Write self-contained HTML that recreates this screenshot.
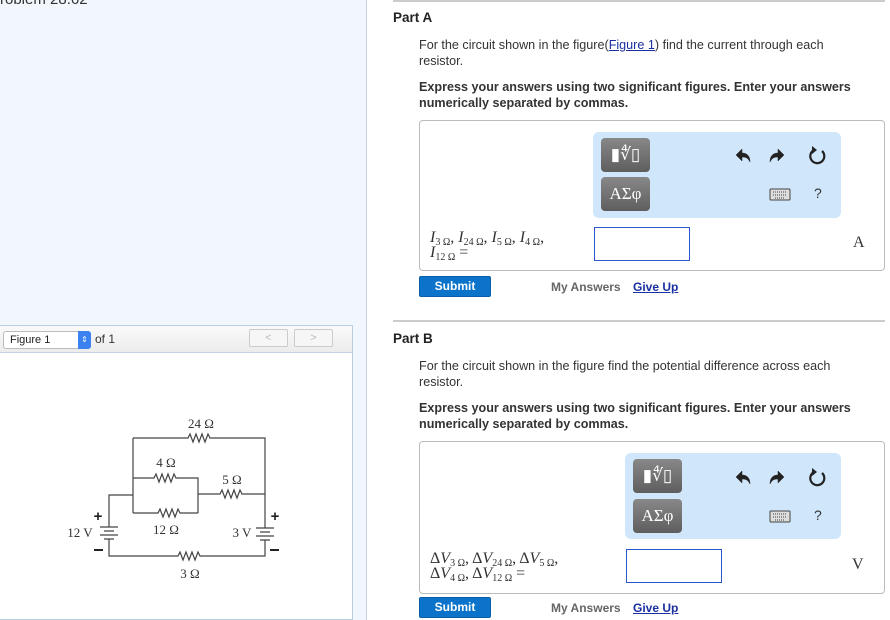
<!DOCTYPE html>
<html><head><meta charset="utf-8"><style>
*{margin:0;padding:0;box-sizing:border-box}
body{width:890px;height:620px;overflow:hidden;background:#fff;font-family:"Liberation Sans",Arial,sans-serif;color:#333;position:relative}
.a{position:absolute}
.t{font-size:12.6px;line-height:16px;color:#333}
.b{font-size:12.6px;line-height:16px;font-weight:bold;color:#333}
.h{font-size:13.5px;font-weight:bold;color:#222}
.box{border:1px solid #bbb;border-radius:4px;background:#fff}
.tb{background:#cfe6fb;border-radius:6px}
.btn{background:linear-gradient(#888,#5e5e5e);border-radius:4px;color:#fff;font-family:"Liberation Serif",serif;font-size:17px;text-align:center}
.inp{border:1px solid #2a57cc;background:#fff}
.sub{background:#0b73c9;border:1px solid #0a5fa8;border-radius:2px;color:#fff;font-weight:bold;font-size:12px;text-align:center;line-height:19px}
.ma{font-size:12px;font-weight:bold;color:#666}
.gu{font-size:12px;font-weight:bold;color:#1a2fa0;text-decoration:underline}
.m{font-family:"Liberation Serif",serif;font-size:16px;color:#333;line-height:15px}
.m i{font-style:italic}
.m sub{font-size:10px;font-style:normal;vertical-align:-3px;line-height:0}
</style></head><body>
<div class="a" style="left:0;top:0;width:367px;height:620px;background:#f2f7fd;border-right:1px solid #c3d3e3"></div>
<div class="a" style="left:0;top:-9px;font-size:15px;color:#333">roblem 28.62</div>
<div class="a" style="left:393px;top:0;width:492px;height:2px;background:#ccc"></div>

<div class="a" style="left:0;top:325px;width:353px;height:295px;background:#fff;border:1px solid #b9cde0;border-left:none"></div>
<div class="a" style="left:0;top:326px;width:352px;height:27px;background:linear-gradient(#fafafa,#ececec);border-bottom:1px solid #c3d3e3"></div>
<div class="a" style="left:3px;top:331px;width:88px;height:18px;border:1px solid #bbb;border-radius:3px;background:#fff;font-size:11px;line-height:16px;padding-left:6px;color:#222">Figure 1</div>
<div class="a" style="left:78px;top:331px;width:13px;height:18px;background:#3b82f0;border-radius:0 3px 3px 0;color:#fff;font-size:8px;text-align:center;line-height:18px">⇕</div>
<div class="a" style="left:95px;top:332px;font-size:12px;color:#333">of 1</div>
<div class="a" style="left:249px;top:329px;width:39px;height:18px;border:1px solid #ccc;border-radius:2px;background:#f6f6f6;color:#bbb;font-size:11px;text-align:center;line-height:16px">&lt;</div>
<div class="a" style="left:294px;top:329px;width:39px;height:18px;border:1px solid #ccc;border-radius:2px;background:#f6f6f6;color:#bbb;font-size:11px;text-align:center;line-height:16px">&gt;</div>

<svg class="a" style="left:0;top:0" width="367" height="620">
<g stroke="#444" stroke-width="1.2" fill="none">
<path d="M133 438H188l2-4 3 8 3-8 3 8 3-8 3 8 3-8 2 4H265V528"/>
<path d="M133 438V513"/>
<path d="M133 478H154l2-4 3 8 3-8 3 8 3-8 3 8 3-8 2 4H198V513"/>
<path d="M133 513H158l2-4 3 8 3-8 3 8 3-8 3 8 3-8 2 4H198"/>
<path d="M198 494H220l2-4 3 8 3-8 3 8 3-8 3 8 3-8 2 4H265"/>
<path d="M133 495H109V527M109 539V556H178l2-4 3 8 3-8 3 8 3-8 3 8 3-8 2 4H265V540"/>
<path d="M100 527H118M104 531H114M100 535H118M104 539H114"/>
<path d="M256 528H274M260 532H270M256 536H274M260 540H270"/>
</g>
<g font-family="Liberation Serif,serif" font-size="13" fill="#333" text-anchor="middle">
<text x="201" y="428">24 Ω</text>
<text x="166" y="467">4 Ω</text>
<text x="232" y="484">5 Ω</text>
<text x="166" y="534">12 Ω</text>
<text x="190" y="578">3 Ω</text>
<text x="80" y="537">12 V</text>
<text x="242" y="537">3 V</text>
</g>
<g font-family="Liberation Sans,sans-serif" font-size="15" font-weight="bold" fill="#222" text-anchor="middle">
<text x="98" y="521">+</text><text x="275" y="521">+</text>
</g>
<path d="M94 550H103M270 550H279" stroke="#222" stroke-width="2"/>
</svg>

<!-- Part A -->
<div class="a h" style="left:393px;top:10px">Part A</div>
<div class="a t" style="left:419px;top:37px;width:440px">For the circuit shown in the figure(<span style="color:#1a2fa0;text-decoration:underline">Figure 1</span>) find the current through each resistor.</div>
<div class="a b" style="left:419px;top:79px;width:460px">Express your answers using two significant figures. Enter your answers numerically separated by commas.</div>
<div class="a box" style="left:419px;top:120px;width:466px;height:151px"></div>
<div class="a tb" style="left:593px;top:132px;width:248px;height:86px"></div>
<div class="a btn" style="left:601px;top:138px;width:49px;height:34px;line-height:34px">▮∜▯</div>
<div class="a btn" style="left:601px;top:177px;width:49px;height:34px;line-height:34px">ΑΣφ</div>
<svg class="a" style="left:730px;top:142px" width="100" height="65">
<g fill="#222" stroke="#222">
<path d="M6 13l6-6v4c5 0 8 3 8 9-2-4-4-5-8-5v4z" stroke-width="0.5"/>
<path d="M54 13l-6-6v4c-5 0-8 3-8 9 2-4 4-5 8-5v4z" stroke-width="0.5"/>
<path d="M92 9a7 7 0 1 1-8-1" fill="none" stroke-width="2.2"/>
<path d="M82 4l5 4-5 4z" stroke="none"/>
<rect x="40" y="47" width="20" height="11" rx="1" fill="#ddd" stroke="#444"/>
<path d="M43 50h14M43 53h14M45 56h10" stroke="#444" stroke-width="1" stroke-dasharray="1 1"/>
</g>
<text x="84" y="56" font-family="Liberation Sans,sans-serif" font-size="14" fill="#333">?</text>
</svg>
<div class="a m" style="left:430px;top:230px;width:170px"><i>I</i><sub>3 Ω</sub>, <i>I</i><sub>24 Ω</sub>, <i>I</i><sub>5 Ω</sub>, <i>I</i><sub>4 Ω</sub>,<br><i>I</i><sub>12 Ω</sub> =</div>
<div class="a inp" style="left:594px;top:227px;width:96px;height:34px"></div>
<div class="a m" style="left:853px;top:235px">A</div>
<div class="a sub" style="left:419px;top:276px;width:72px;height:21px">Submit</div>
<div class="a ma" style="left:551px;top:280px">My Answers</div>
<div class="a gu" style="left:633px;top:280px">Give Up</div>

<!-- Part B -->
<div class="a" style="left:393px;top:320px;width:492px;height:2px;background:#ccc"></div>
<div class="a h" style="left:393px;top:331px">Part B</div>
<div class="a t" style="left:419px;top:358px;width:445px">For the circuit shown in the figure find the potential difference across each resistor.</div>
<div class="a b" style="left:419px;top:400px;width:460px">Express your answers using two significant figures. Enter your answers numerically separated by commas.</div>
<div class="a box" style="left:419px;top:441px;width:466px;height:153px"></div>
<div class="a tb" style="left:625px;top:453px;width:216px;height:86px"></div>
<div class="a btn" style="left:633px;top:459px;width:49px;height:34px;line-height:34px">▮∜▯</div>
<div class="a btn" style="left:633px;top:499px;width:49px;height:34px;line-height:34px">ΑΣφ</div>
<svg class="a" style="left:730px;top:464px" width="100" height="65">
<g fill="#222" stroke="#222">
<path d="M6 13l6-6v4c5 0 8 3 8 9-2-4-4-5-8-5v4z" stroke-width="0.5"/>
<path d="M54 13l-6-6v4c-5 0-8 3-8 9 2-4 4-5 8-5v4z" stroke-width="0.5"/>
<path d="M92 9a7 7 0 1 1-8-1" fill="none" stroke-width="2.2"/>
<path d="M82 4l5 4-5 4z" stroke="none"/>
<rect x="40" y="47" width="20" height="11" rx="1" fill="#ddd" stroke="#444"/>
<path d="M43 50h14M43 53h14M45 56h10" stroke="#444" stroke-width="1" stroke-dasharray="1 1"/>
</g>
<text x="84" y="56" font-family="Liberation Sans,sans-serif" font-size="14" fill="#333">?</text>
</svg>
<div class="a m" style="left:430px;top:551px;width:190px">Δ<i>V</i><sub>3 Ω</sub>, Δ<i>V</i><sub>24 Ω</sub>, Δ<i>V</i><sub>5 Ω</sub>,<br>Δ<i>V</i><sub>4 Ω</sub>, Δ<i>V</i><sub>12 Ω</sub> =</div>
<div class="a inp" style="left:626px;top:549px;width:96px;height:34px"></div>
<div class="a m" style="left:852px;top:557px">V</div>
<div class="a sub" style="left:419px;top:597px;width:72px;height:21px">Submit</div>
<div class="a ma" style="left:551px;top:601px">My Answers</div>
<div class="a gu" style="left:633px;top:601px">Give Up</div>
</body></html>
